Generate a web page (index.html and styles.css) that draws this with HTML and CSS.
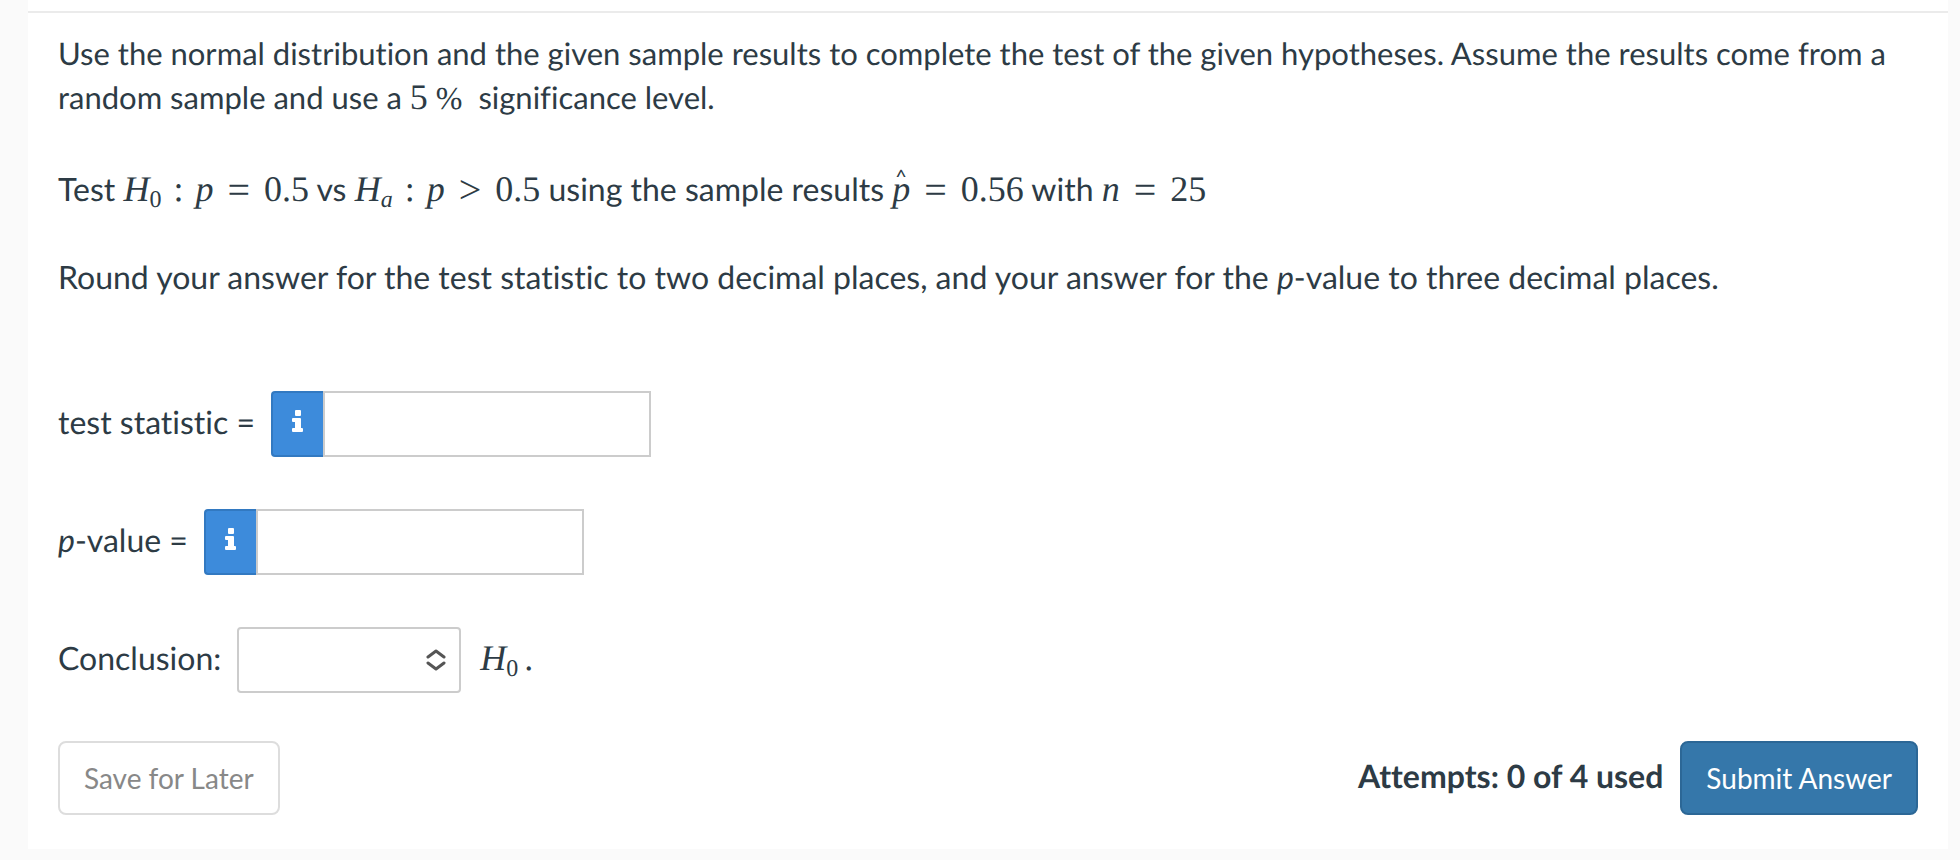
FILE: index.html
```html
<!DOCTYPE html>
<html lang="en">
<head>
<meta charset="utf-8">
<title>Hypothesis test question</title>
<link rel="stylesheet" href="styles.css">
</head>
<body>
<main class="panel">
  <form class="question">
    <p class="text lead">Use the normal distribution and the given sample results to complete the test of the given hypotheses. Assume the results come from a random sample and use a <span class="math">5<span class="percent">%</span></span> significance level.</p>
    <p class="text equation">Test <span class="math"><i>H</i><sub>0</sub><span class="colon">:</span><i>p</i><span class="op">=</span>0.5</span> vs <span class="math"><i>H</i><sub><i>a</i></sub><span class="colon">:</span><i>p</i><span class="op">&gt;</span>0.5</span> using the sample results <span class="math"><span class="hatted"><i>p</i><span class="hat">^</span></span><span class="op">=</span>0.56</span> with <span class="math"><i>n</i><span class="op">=</span>25</span></p>
    <p class="text">Round your answer for the test statistic to two decimal places, and your answer for the <em>p</em>-value to three decimal places.</p>
    <div class="answers">
      <div class="answer">
        <label class="caption" for="statistic">test statistic =</label>
        <div class="entry">
          <button class="info" type="button" aria-label="Entry help"><svg width="12" height="24" viewBox="0 0 12 24" fill="currentColor" aria-hidden="true"><rect x="3" y="0" width="6" height="6" rx="1"/><path d="M1 8h7q1 0 1 1v9h1q1 0 1 1v2q0 1-1 1H1q-1 0-1-1v-2q0-1 1-1h2v-6H1q-1 0-1-1V9q0-1 1-1z"/></svg></button>
          <input class="field" id="statistic" type="text">
        </div>
      </div>
      <div class="answer">
        <label class="caption" for="pvalue"><em>p</em>-value =</label>
        <div class="entry">
          <button class="info" type="button" aria-label="Entry help"><svg width="12" height="24" viewBox="0 0 12 24" fill="currentColor" aria-hidden="true"><rect x="3" y="0" width="6" height="6" rx="1"/><path d="M1 8h7q1 0 1 1v9h1q1 0 1 1v2q0 1-1 1H1q-1 0-1-1v-2q0-1 1-1h2v-6H1q-1 0-1-1V9q0-1 1-1z"/></svg></button>
          <input class="field" id="pvalue" type="text">
        </div>
      </div>
      <div class="answer">
        <label class="caption" for="conclusion">Conclusion:</label>
        <div class="picker">
          <select class="select" id="conclusion"><option></option><option>Reject</option><option>Do not reject</option></select>
          <svg class="chevrons" width="20" height="22" viewBox="0 0 20 22" fill="none" stroke="#555" stroke-width="3" stroke-linecap="round" stroke-linejoin="round" aria-hidden="true"><path d="M2 8l8-6 8 6M2 14l8 6 8-6"/></svg>
        </div>
        <span class="math caption symbol"><i>H</i><sub>0</sub><span class="stop">.</span></span>
      </div>
    </div>
    <div class="actions">
      <button class="button save" type="button">Save for Later</button>
      <strong class="attempts caption">Attempts: 0 of 4 used</strong>
      <button class="button submit" type="submit">Submit Answer</button>
    </div>
  </form>
</main>
</body>
</html>
```
FILE: styles.css
```css
* {
  box-sizing: border-box;
}

body {
  margin: 0;
  background: #fafafa;
  color: #2d3b45;
  font: 32px/44px Lato, sans-serif;
  font-variant-ligatures: no-common-ligatures;
  text-rendering: geometricPrecision;
}

.panel {
  margin: 0 12px 0 28px;
  padding-top: 11px;
  background: #fff;
}

.question {
  padding: 18px 30px 34px;
  border-top: 2px solid #ebebeb;
}

.text {
  margin: 0 0 44px;
}

.lead {
  font-size: 31px;
}

.equation {
  padding-top: 4px;
}

.math {
  font-family: "Liberation Serif", serif;
  font-size: 36px;
  line-height: 1;
}

.math sub {
  font-size: 24px;
  line-height: 0;
  vertical-align: -6px;
}

.percent {
  margin: 0 8px;
  font-size: 32px;
}

.colon {
  margin: 0 12px;
}

.op {
  margin: 0 14px;
  font-size: 40px;
  line-height: 0;
  vertical-align: -2px;
}

.stop {
  margin-left: 6px;
}

.hatted {
  position: relative;
}

.hat {
  position: absolute;
  top: -2px;
  left: 3px;
  font-family: Lato, sans-serif;
  font-size: 20px;
  line-height: 1;
}

.answers {
  display: grid;
  gap: 52px;
  padding-top: 48px;
}

.answer {
  display: flex;
  align-items: center;
  gap: 16px;
}

.caption {
  padding-bottom: 4px;
}

.symbol {
  padding-left: 3px;
}

.entry {
  display: flex;
  height: 66px;
}

.info {
  display: grid;
  place-items: center;
  width: 52px;
  padding: 0 0 4px;
  border: 2px solid #3279c1;
  border-right: 0;
  border-radius: 4px 0 0 4px;
  background: #3d8bdb;
  color: #fff;
}

.field {
  width: 328px;
  padding: 0 12px;
  border: 2px solid #ccc;
  border-radius: 0;
  background: #fff;
  color: inherit;
  font: inherit;
}

.picker {
  display: grid;
  align-items: center;
}

.select,
.chevrons {
  grid-area: 1 / 1;
}

.select {
  width: 224px;
  height: 66px;
  padding: 0 48px 0 12px;
  border: 2px solid #ccc;
  border-radius: 4px;
  background: #fff;
  color: inherit;
  font: inherit;
  appearance: none;
}

.chevrons {
  justify-self: end;
  margin-right: 15px;
  pointer-events: none;
}

.actions {
  display: flex;
  align-items: center;
  gap: 17px;
  padding-top: 48px;
}

.button {
  height: 74px;
  padding: 0 24px;
  border: 2px solid #ddd;
  border-radius: 8px;
  background: #fff;
  color: #888;
  font: 28px/44px Lato, sans-serif;
}

.submit {
  border-color: #2c6796;
  background: #3577aa;
  color: #fff;
}

.attempts {
  margin-left: auto;
}
```
